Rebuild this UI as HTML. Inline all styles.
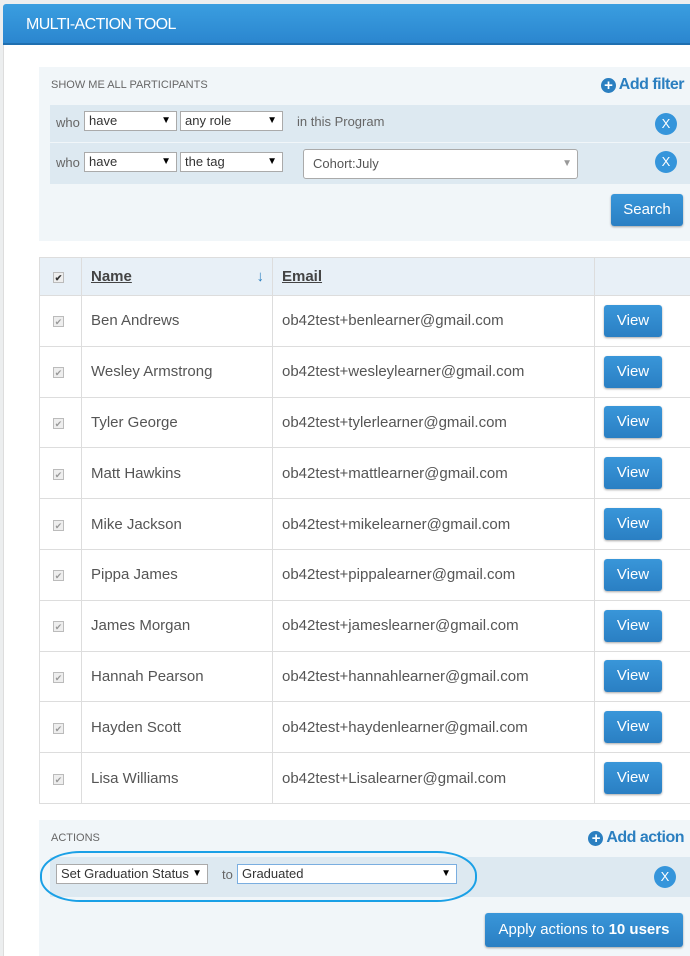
<!DOCTYPE html>
<html><head><style>
*{box-sizing:border-box;margin:0;padding:0}
body{width:690px;height:956px;background:#eceeef;font-family:"Liberation Sans",sans-serif;position:relative;overflow:hidden;color:#555}
.hdr{position:absolute;left:3px;top:4px;width:690px;height:41px;background:linear-gradient(#3a9ee0,#2b86cf);border-bottom:2px solid #1f6fb0;border-radius:3px 0 0 0;color:#fff;font-size:16px;line-height:41px;padding-left:23px;letter-spacing:-0.6px}
.panel{position:absolute;left:3px;top:45px;width:690px;height:911px;background:#fff;border-left:1px solid #ddd}
.box{position:absolute;left:39px;width:651px;background:#f1f6f9}
.lbl{position:absolute;left:12px;font-size:11px;color:#666}
.add{position:absolute;right:6px;font-size:16px;font-weight:bold;color:#2b7fc0;letter-spacing:-0.5px}
.add i{display:inline-block;width:15px;height:15px;border-radius:50%;background:#2b7fc0;color:#fff;font-style:normal;font-size:15px;line-height:15px;text-align:center;vertical-align:-1px;margin-right:3px}
.row{position:absolute;left:11px;width:640px;background:#dde9f1}
.sel{position:absolute;height:20px;background:#fff;border:1px solid #aaa;font-size:13px;color:#333;padding-left:4px;line-height:18px}
.sel b{position:absolute;right:5px;top:0;font-size:10px;color:#000}
.x{position:absolute;width:22px;height:22px;border-radius:50%;background:#3595db;color:#fff;font-size:13px;text-align:center;line-height:22px}
.txt{position:absolute;font-size:13px;color:#666}
.btn{position:absolute;background:linear-gradient(#3996d9,#2a7fc3);color:#fff;border-radius:3px;box-shadow:0 1px 2px rgba(0,0,0,.35);text-align:center}
table{position:absolute;left:39px;top:257px;width:660px;border-collapse:collapse;font-size:15px}
td,th{border:1px solid #ddd;height:50.8px;text-align:left;padding-left:9px;color:#555;font-weight:normal}
th{height:38px;background:#e8f0f7;font-weight:bold;color:#444;text-decoration:underline}
tr td:first-child,tr th:first-child{width:42px;padding-left:13px}
.cb{display:inline-block;width:11px;height:11px;border:1px solid #bbb;background:#eee;font-size:9px;line-height:10px;text-align:center;color:#999;text-decoration:none}
.vb{display:inline-block;width:58px;height:32px;line-height:32px;font-size:15px}
</style></head><body>
<div class="hdr">MULTI-ACTION TOOL</div>
<div class="panel"></div>
<div class="box" style="top:67px;height:174px">
 <div class="lbl" style="top:12px">SHOW ME ALL PARTICIPANTS</div>
 <div class="add" style="top:9px"><i>+</i>Add filter</div>
 <div class="row" style="top:38px;height:37px">
  <span class="txt" style="left:6px;top:10px">who</span>
  <div class="sel" style="left:34px;top:6px;width:93px">have<b>▼</b></div>
  <div class="sel" style="left:130px;top:6px;width:103px">any role<b>▼</b></div>
  <span class="txt" style="left:247px;top:9px">in this Program</span>
  <div class="x" style="left:605px;top:8px">X</div>
 </div>
 <div class="row" style="top:76px;height:41px">
  <span class="txt" style="left:6px;top:12px">who</span>
  <div class="sel" style="left:34px;top:9px;width:93px">have<b>▼</b></div>
  <div class="sel" style="left:130px;top:9px;width:103px">the tag<b>▼</b></div>
  <div class="sel" style="left:253px;top:6px;width:275px;height:30px;line-height:28px;border-radius:3px;padding-left:9px;color:#555">Cohort:July<b style="color:#999;top:0">▼</b></div>
  <div class="x" style="left:605px;top:8px">X</div>
 </div>
 <div class="btn" style="left:572px;top:127px;width:72px;height:32px;line-height:32px;font-size:15px">Search</div>
</div>
<table>
<tr><th><span class="cb" style="color:#333">✔</span></th><th style="width:191px">Name <span style="float:right;margin-right:8px;text-decoration:none;color:#2b7fc0;font-weight:normal">↓</span></th><th style="width:322px">Email</th><th></th></tr>
<tr><td><span class="cb">✔</span></td><td>Ben Andrews</td><td>ob42test+benlearner@gmail.com</td><td><span class="btn vb" style="position:static">View</span></td></tr>
<tr><td><span class="cb">✔</span></td><td>Wesley Armstrong</td><td>ob42test+wesleylearner@gmail.com</td><td><span class="btn vb" style="position:static">View</span></td></tr>
<tr><td><span class="cb">✔</span></td><td>Tyler George</td><td>ob42test+tylerlearner@gmail.com</td><td><span class="btn vb" style="position:static">View</span></td></tr>
<tr><td><span class="cb">✔</span></td><td>Matt Hawkins</td><td>ob42test+mattlearner@gmail.com</td><td><span class="btn vb" style="position:static">View</span></td></tr>
<tr><td><span class="cb">✔</span></td><td>Mike Jackson</td><td>ob42test+mikelearner@gmail.com</td><td><span class="btn vb" style="position:static">View</span></td></tr>
<tr><td><span class="cb">✔</span></td><td>Pippa James</td><td>ob42test+pippalearner@gmail.com</td><td><span class="btn vb" style="position:static">View</span></td></tr>
<tr><td><span class="cb">✔</span></td><td>James Morgan</td><td>ob42test+jameslearner@gmail.com</td><td><span class="btn vb" style="position:static">View</span></td></tr>
<tr><td><span class="cb">✔</span></td><td>Hannah Pearson</td><td>ob42test+hannahlearner@gmail.com</td><td><span class="btn vb" style="position:static">View</span></td></tr>
<tr><td><span class="cb">✔</span></td><td>Hayden Scott</td><td>ob42test+haydenlearner@gmail.com</td><td><span class="btn vb" style="position:static">View</span></td></tr>
<tr><td><span class="cb">✔</span></td><td>Lisa Williams</td><td>ob42test+Lisalearner@gmail.com</td><td><span class="btn vb" style="position:static">View</span></td></tr>
</table>
<div class="box" style="top:820px;height:136px">
 <div class="lbl" style="top:12px">ACTIONS</div>
 <div class="add" style="top:9px"><i>+</i>Add action</div>
 <div class="row" style="top:37px;height:40px">
  <div class="sel" style="left:6px;top:7px;width:152px">Set Graduation Status<b>▼</b></div>
  <span class="txt" style="left:172px;top:10px">to</span>
  <div class="sel" style="left:187px;top:7px;width:220px;border-color:#7aaee0">Graduated<b>▼</b></div>
  <div class="x" style="left:604px;top:9px">X</div>
 </div>
 <div class="btn" style="left:446px;top:93px;width:198px;height:34px;line-height:34px;font-size:15px">Apply actions to <b>10 users</b></div>
</div>
<div style="position:absolute;left:40px;top:851px;width:437px;height:51px;border:2px solid #1aa0e6;border-radius:40px/24px"></div>
</body></html>
